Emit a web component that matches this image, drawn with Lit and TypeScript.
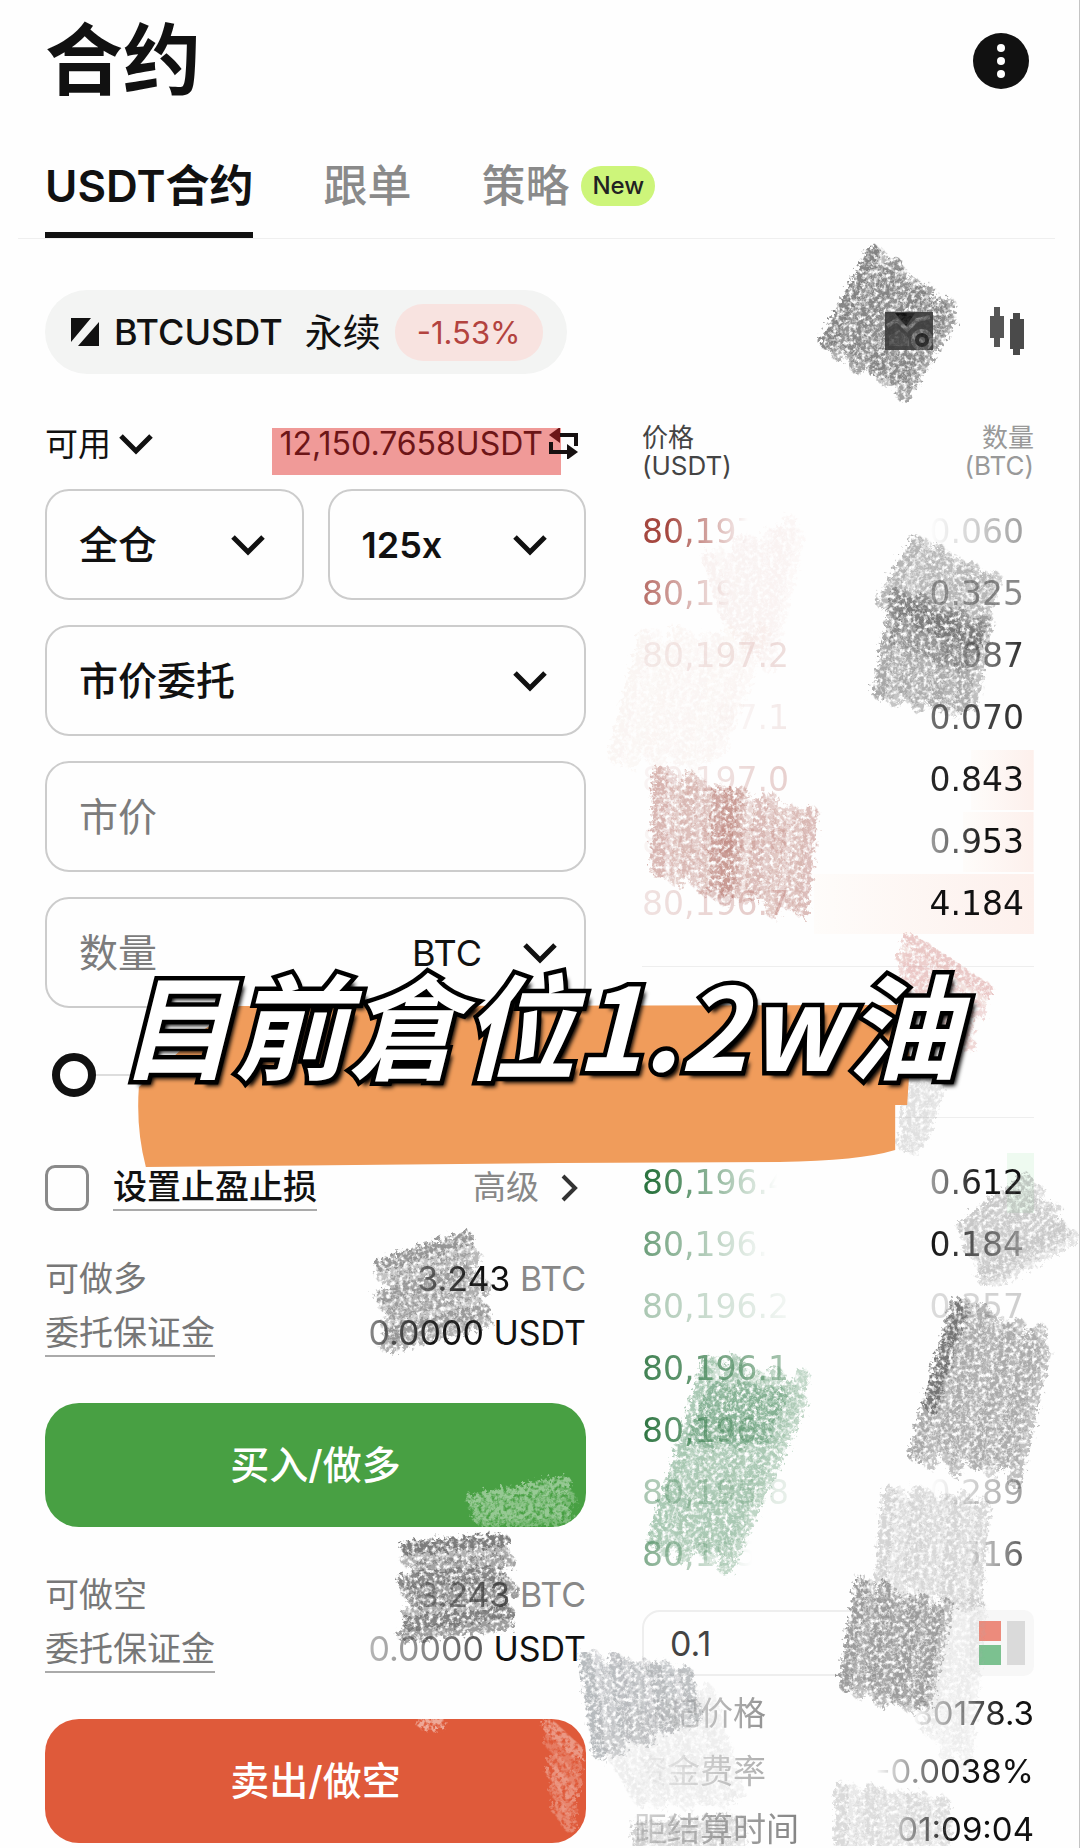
import { css, html, LitElement, svg } from 'lit';
import { customElement } from 'lit/decorators.js';
import { styleMap } from 'lit/directives/style-map.js';

type Point = [number, number];

// opacity of the text at its left and right end
type Fade = [number, number];

interface Level {
  price: string;
  priceFade: Fade;
  amount: string;
  amountFade: Fade;
  depth: number;
}

interface Scribble {
  from: [Point, Point];
  to: [Point, Point];
  color: string;
  opacity: number;
  lines: number;
}

const level = (
  price: string,
  priceFade: Fade,
  amount: string,
  amountFade: Fade,
  depth = 0
): Level => ({ price, priceFade, amount, amountFade, depth });

const asks: Level[] = [
  level('80,197.5', [1.3, -0.5], '0.060', [0, 0.4]),
  level('80,197.3', [0.8, -0.5], '0.325', [0.4, 0.5]),
  level('80,197.2', [0.1, 0.18], '0.087', [0, 0.9]),
  level('80,197.1', [-0.1, 0.12], '0.070', [0.6, 0.9]),
  level('80,197.0', [0.05, 0.25], '0.843', [0.9, 1], 16),
  level('80,196.8', [0.05, 0.2], '0.953', [0.4, 1.4], 18),
  level('80,196.7', [0.15, 0.3], '4.184', [1, 1], 56)
];

const bids: Level[] = [
  level('80,196.4', [1.1, -0.1], '0.612', [0.4, 1.5], 7),
  level('80,196.3', [0.7, -0.1], '0.184', [1, 0.4]),
  level('80,196.2', [0.4, 0.05], '0.357', [0.15, 0.2]),
  level('80,196.1', [0.9, 0.4], '', [0, 0]),
  level('80,196.0', [1, 0], '', [0, 0]),
  level('80,195.8', [0.4, 0.1], '0.289', [0, 0.4]),
  level('80,195.7', [0.6, -0.2], '0.516', [-0.4, 0.7])
];

const scribbles: Scribble[] = [
  { from: [[873, 254], [953, 316]], to: [[828, 342], [908, 388]], color: '#3c3c3c', opacity: 0.66, lines: 13 },
  { from: [[917, 544], [994, 584]], to: [[884, 602], [975, 648]], color: '#555', opacity: 0.45, lines: 12 },
  { from: [[898, 598], [986, 628]], to: [[880, 692], [970, 710]], color: '#4c4c4c', opacity: 0.5, lines: 12 },
  { from: [[910, 605], [980, 640]], to: [[895, 640], [960, 665]], color: '#444', opacity: 0.3, lines: 8 },
  { from: [[660, 776], [812, 818]], to: [[658, 870], [802, 910]], color: '#b06a60', opacity: 0.5, lines: 16 },
  { from: [[720, 798], [736, 802]], to: [[716, 892], [730, 896]], color: '#a55c52', opacity: 0.35, lines: 4 },
  { from: [[710, 560], [800, 525]], to: [[730, 620], [770, 660]], color: '#e9c9c4', opacity: 0.22, lines: 10 },
  { from: [[645, 640], [760, 640]], to: [[616, 756], [715, 760]], color: '#eed4cc', opacity: 0.22, lines: 12 },
  { from: [[912, 942], [905, 985]], to: [[986, 990], [960, 1050]], color: '#c4605a', opacity: 0.35, lines: 7 },
  { from: [[915, 1080], [940, 1080]], to: [[905, 1145], [920, 1145]], color: '#999', opacity: 0.3, lines: 4 },
  { from: [[966, 1228], [992, 1284]], to: [[1026, 1182], [1070, 1240]], color: '#666', opacity: 0.36, lines: 10 },
  { from: [[960, 1312], [1046, 1344]], to: [[916, 1454], [1018, 1470]], color: '#505050', opacity: 0.5, lines: 13 },
  { from: [[958, 1308], [964, 1308]], to: [[930, 1405], [934, 1407]], color: '#333', opacity: 0.45, lines: 2 },
  { from: [[708, 1368], [806, 1392]], to: [[656, 1540], [733, 1554]], color: '#4f8f63', opacity: 0.5, lines: 13 },
  { from: [[715, 1390], [780, 1395]], to: [[695, 1440], [760, 1440]], color: '#2f7a48', opacity: 0.35, lines: 8 },
  { from: [[890, 1496], [984, 1506]], to: [[882, 1580], [976, 1606]], color: '#777', opacity: 0.32, lines: 11 },
  { from: [[862, 1588], [946, 1614]], to: [[846, 1684], [926, 1708]], color: '#3c3c3c', opacity: 0.52, lines: 12 },
  { from: [[960, 1610], [980, 1612]], to: [[930, 1730], [966, 1765]], color: '#aaa', opacity: 0.22, lines: 5 },
  { from: [[842, 1792], [943, 1804]], to: [[842, 1844], [946, 1844]], color: '#888', opacity: 0.32, lines: 11 },
  { from: [[587, 1662], [686, 1674]], to: [[600, 1754], [696, 1718]], color: '#6c7278', opacity: 0.5, lines: 11 },
  { from: [[600, 1730], [710, 1700]], to: [[640, 1800], [740, 1800]], color: '#b5b5b5', opacity: 0.24, lines: 12 },
  { from: [[640, 1830], [740, 1822]], to: [[640, 1846], [740, 1846]], color: '#777', opacity: 0.35, lines: 10 },
  { from: [[384, 1266], [392, 1346]], to: [[466, 1239], [486, 1322]], color: '#404040', opacity: 0.58, lines: 9 },
  { from: [[410, 1549], [410, 1636]], to: [[502, 1542], [508, 1624]], color: '#303030', opacity: 0.68, lines: 9 },
  { from: [[476, 1502], [486, 1522]], to: [[564, 1484], [568, 1518]], color: '#fff', opacity: 0.45, lines: 5 },
  { from: [[550, 1728], [558, 1808]], to: [[578, 1754], [570, 1826]], color: '#fff', opacity: 0.4, lines: 6 },
  { from: [[424, 1724], [430, 1724]], to: [[438, 1724], [434, 1726]], color: '#fff', opacity: 0.5, lines: 2 }
];

const mix = (a: Point, b: Point, t: number): Point => [
  a[0] + (b[0] - a[0]) * t,
  a[1] + (b[1] - a[1]) * t
];

// repeatable wobble between -1 and 1
const wobble = (n: number) => Math.sin(n * 12.9898) * Math.cos(n * 4.1414);

const renderScribble = (mark: Scribble) => {
  const lines = Array.from({ length: mark.lines }, (_, i) => {
    const t = i / (mark.lines - 1);
    const start = mix(mark.from[0], mark.from[1], t);
    const end = mix(mark.to[0], mark.to[1], t);
    const a = mix(start, end, wobble(i + 1) * 0.1);
    const b = mix(end, start, wobble(i + 7) * 0.1);
    return svg`<line
      x1=${a[0]} y1=${a[1]} x2=${b[0]} y2=${b[1]}
      stroke-opacity=${0.7 + 0.25 * wobble(i + 3)}
    />`;
  });
  return svg`<g stroke=${mark.color} opacity=${mark.opacity}>${lines}</g>`;
};

const fadeStyle = ([start, end]: Fade) => {
  // an end outside 0..1 moves the point where the text is fully drawn or gone
  const clamp = (v: number) => Math.min(1, Math.max(0, v));
  const at = (limit: number) => Math.round(((limit - start) / (end - start)) * 100);
  const limits = start < end ? [0, 1] : [1, 0];
  const stops = [`rgba(0,0,0,${clamp(start)}) 0%`];
  limits.forEach((limit) => {
    if (start !== end && at(limit) > 0 && at(limit) < 100) {
      stops.push(`rgba(0,0,0,${limit}) ${at(limit)}%`);
    }
  });
  stops.push(`rgba(0,0,0,${clamp(end)}) 100%`);
  return styleMap({ maskImage: `linear-gradient(to right, ${stops.join(', ')})` });
};

const chevron = html`
  <svg class="chevron" viewBox="0 0 34 22" aria-hidden="true">
    <path d="M2 3L17 18L32 3" fill="none" stroke="currentColor" stroke-width="5" />
  </svg>
`;

@customElement('order-book')
export class OrderBook extends LitElement {
  static override styles = css`
    :host {
      display: block;
      min-width: 0;
      padding-top: 4px;
    }
    table {
      width: 100%;
      border-collapse: separate;
      border-spacing: 0 2px;
    }
    th {
      padding: 0 0 20px;
      font-size: 26px;
      font-weight: 400;
      line-height: 28px;
      text-align: left;
      color: #444;
    }
    th + th {
      text-align: right;
      color: #999;
    }
    td {
      height: 60px;
      padding: 0;
      font-family: 'DejaVu Sans', sans-serif;
      font-size: 33px;
      line-height: 40px;
    }
    td + td {
      padding-right: 10px;
      text-align: right;
      color: #111;
    }
    tr {
      background-repeat: no-repeat;
      background-position: right;
    }
    .asks tr {
      color: #a5473f;
      background-image: linear-gradient(to right, #fefcfa, #fdf0ec);
    }
    .bids tr {
      color: #2c7440;
      background-image: linear-gradient(#eefaf0, #eefaf0);
    }
    thead tr {
      background-size: 0;
    }
    .last {
      height: 150px;
      margin: 30px 0 33px;
      border: solid #eee;
      border-width: 1px 0;
    }
    .tools {
      display: flex;
      justify-content: space-between;
      margin-top: 23px;
      height: 66px;
    }
    select {
      box-sizing: border-box;
      width: 64%;
      padding: 0 26px;
      border: 2px solid #eee;
      border-radius: 18px;
      background: none;
      appearance: none;
      font: 400 34px 'Inter', sans-serif;
      color: #444;
    }
    button {
      display: grid;
      place-items: center;
      width: 64px;
      padding: 0;
      border: 0;
      border-radius: 10px;
      background: #f7f7f7;
    }
    dl {
      display: grid;
      grid-template-columns: auto auto;
      justify-content: space-between;
      row-gap: 20px;
      margin: 18px 0 0 -8px;
      font-size: 33px;
      line-height: 38px;
    }
    dt {
      color: #777;
    }
    dd {
      margin: 0;
      text-align: right;
      color: #111;
    }
    .hint {
      text-decoration: underline 2px #ddd;
      text-underline-offset: 10px;
    }
  `;

  private renderRows(levels: Level[]) {
    return levels.map(
      (row) => html`
        <tr style=${styleMap({ backgroundSize: `${row.depth}% 100%` })}>
          <td><span style=${fadeStyle(row.priceFade)}>${row.price}</span></td>
          <td><span style=${fadeStyle(row.amountFade)}>${row.amount}</span></td>
        </tr>
      `
    );
  }

  override render() {
    return html`
      <table class="asks">
        <thead>
          <tr>
            <th scope="col">价格<br />(USDT)</th>
            <th scope="col">数量<br />(BTC)</th>
          </tr>
        </thead>
        <tbody>
          ${this.renderRows(asks)}
        </tbody>
      </table>
      <div class="last"></div>
      <table class="bids">
        <tbody>
          ${this.renderRows(bids)}
        </tbody>
      </table>
      <div class="tools">
        <select aria-label="价格">
          <option>0.1</option>
        </select>
        <button aria-label="数量">
          <svg width="46" height="44" viewBox="0 0 46 44">
            <rect width="22" height="20" fill="#ec8b7c" />
            <rect y="24" width="22" height="20" fill="#7cc190" />
            <rect x="28" width="18" height="44" fill="#dadada" />
          </svg>
        </button>
      </div>
      <dl>
        <dt><span style=${fadeStyle([0, 0.8])}>标记价格</span></dt>
        <dd><span style=${fadeStyle([0, 1.3])}>80178.3</span></dd>
        <dt><span class="hint" style=${fadeStyle([0, 0.6])}>资金费率</span></dt>
        <dd><span style=${fadeStyle([0, 1.8])}>-0.0038%</span></dd>
        <dt><span style=${fadeStyle([0.3, 0.9])}>距结算时间</span></dt>
        <dd><span style=${fadeStyle([0.2, 2.4])}>01:09:04</span></dd>
      </dl>
    `;
  }
}

@customElement('app-root')
export class AppRoot extends LitElement {
  static override styles = css`
    :host {
      position: relative;
      display: block;
      box-sizing: border-box;
      overflow: hidden;
      border-right: 1px solid #c4c4c4;
      background: #fefefe;
      color: #111;
      font-family: 'Inter', 'Noto Sans CJK SC', sans-serif;
    }
    button,
    input,
    select {
      font-family: inherit;
      color: inherit;
    }
    button {
      border: 0;
      padding: 0;
      background: none;
    }
    header {
      display: flex;
      align-items: center;
      justify-content: space-between;
      height: 122px;
      padding: 0 50px 0 45px;
    }
    h1 {
      margin: 0;
      font-size: 78px;
      font-weight: 700;
      line-height: 88px;
    }
    .menu {
      display: block;
      height: 56px;
    }
    nav {
      display: flex;
      gap: 70px;
      margin: 0 24px 0 18px;
      padding: 0 27px;
      border-bottom: 1px solid #efefef;
    }
    .tab {
      display: flex;
      align-items: center;
      gap: 12px;
      padding: 38px 0 20px;
      border-bottom: 6px solid transparent;
      font-size: 44px;
      font-weight: 500;
      line-height: 52px;
      color: #8a8a8a;
      text-decoration: none;
    }
    .tab.active {
      border-color: #111;
      font-weight: 600;
      color: #111;
    }
    .new {
      padding: 0 11px;
      border-radius: 20px;
      background: #cdf57a;
      font-size: 24px;
      line-height: 40px;
      color: #222;
    }
    .toolbar {
      display: flex;
      align-items: center;
      justify-content: space-between;
      padding: 51px 55px 0 45px;
    }
    .pair {
      display: flex;
      align-items: center;
      height: 84px;
      padding: 0 24px 0 26px;
      border-radius: 42px;
      background: #f3f4f3;
      font-size: 36px;
      font-weight: 500;
    }
    .pair svg {
      margin-right: 15px;
    }
    .kind {
      margin: 0 14px 0 22px;
      padding-bottom: 5px;
      font-size: 38px;
      font-weight: 400;
    }
    .change {
      padding: 0 22px;
      border-radius: 28px;
      background: #f8e3e0;
      font-size: 31px;
      font-weight: 400;
      line-height: 57px;
      color: #b3433f;
    }
    .views {
      display: flex;
      align-items: center;
      gap: 57px;
    }
    main {
      display: grid;
      grid-template-columns: minmax(0, 541fr) minmax(0, 392fr);
      column-gap: 56px;
      padding: 44px 45px 0;
    }
    form {
      padding: 10px 0 6px;
    }
    .chevron {
      width: 34px;
      height: 22px;
    }
    .balance {
      display: flex;
      align-items: flex-start;
      justify-content: space-between;
      margin-bottom: 14px;
      padding-right: 8px;
      font-size: 32px;
      line-height: 32px;
    }
    .balance button {
      display: flex;
      align-items: center;
      gap: 8px;
      font-size: 33px;
      line-height: 32px;
    }
    .amount {
      display: flex;
    }
    .amount span {
      padding: 0 18px 15px 8px;
      background: #f09a98;
      color: #6d1517;
    }
    .amount svg {
      margin-left: -12px;
    }
    .fields {
      display: grid;
      grid-template-columns: 1fr 1fr;
      gap: 25px 24px;
    }
    .field {
      display: grid;
      grid-template-columns: minmax(0, 1fr);
      align-items: center;
      box-sizing: border-box;
      height: 111px;
      border: 2px solid #ccc;
      border-radius: 24px;
    }
    .wide {
      grid-column: 1 / -1;
    }
    .field > * {
      grid-row: 1;
      grid-column: 1;
    }
    .field .chevron {
      justify-self: end;
      margin-right: 37px;
      pointer-events: none;
    }
    .field select,
    .field input {
      box-sizing: border-box;
      width: 100%;
      height: 107px;
      padding: 0 32px;
      border: 0;
      background: none;
      appearance: none;
      font-size: 39px;
      font-weight: 500;
    }
    .field .leverage {
      font-size: 36px;
      font-weight: 600;
    }
    .field input::placeholder {
      color: #7c7c7c;
      opacity: 1;
      font-weight: 400;
    }
    .quantity {
      grid-template-columns: minmax(0, 1fr) 204px;
    }
    .quantity > select,
    .quantity > .chevron {
      grid-column: 2;
    }
    .field.quantity .chevron {
      margin-right: 27px;
    }
    .field.quantity select {
      font-size: 36px;
      font-weight: 400;
    }
    .slider {
      display: block;
      width: calc(100% - 7px);
      height: 44px;
      margin: 45px 0 0 7px;
      background: linear-gradient(#ddd, #ddd) center / 100% 2px no-repeat;
      appearance: none;
    }
    .slider::-webkit-slider-thumb {
      box-sizing: border-box;
      width: 44px;
      height: 44px;
      border: 8px solid #111;
      border-radius: 50%;
      background: #fff;
      appearance: none;
    }
    .stops {
      display: flex;
      align-items: center;
      justify-content: space-between;
      height: 48px;
      margin: 67px 0 40px;
      padding-right: 8px;
      font-size: 34px;
      line-height: 42px;
    }
    .stops label,
    .stops a {
      display: flex;
      align-items: center;
      gap: 24px;
    }
    .stops label {
      font-weight: 500;
    }
    .stops a {
      gap: 21px;
      font-size: 33px;
      color: #888;
      text-decoration: none;
    }
    .stops span {
      padding-bottom: 2px;
    }
    .stops input {
      width: 44px;
      height: 46px;
      margin: 0;
      border: 3px solid #8a8a8a;
      border-radius: 10px;
      appearance: none;
    }
    .hint {
      text-decoration: underline 2px #aaa;
      text-underline-offset: 10px;
    }
    dl {
      display: grid;
      grid-template-columns: auto auto;
      justify-content: space-between;
      margin: 0;
      font-size: 34px;
      line-height: 54px;
    }
    dt {
      color: #777;
    }
    dd {
      margin: 0;
      text-align: right;
    }
    .unit {
      color: #888;
    }
    .submit {
      display: block;
      width: 100%;
      height: 124px;
      margin: 43px 0 41px;
      padding-bottom: 6px;
      border-radius: 34px;
      font-size: 39px;
      font-weight: 500;
      color: #fff;
    }
    .long {
      background: #48a043;
    }
    .short {
      margin-bottom: 0;
      background: #df5a3a;
    }
    .marks {
      position: absolute;
      top: 0;
      left: 0;
      width: 100%;
      pointer-events: none;
    }
    .caption {
      position: absolute;
      top: 942px;
      left: 0;
      width: 100%;
      margin: 0;
      font-family: 'Noto Sans CJK TC', sans-serif;
      font-size: 114px;
      font-weight: 700;
      font-style: italic;
      line-height: 160px;
      text-align: center;
      white-space: nowrap;
      color: #fff;
      -webkit-text-stroke: 9px #000;
      paint-order: stroke fill;
      text-shadow: 5px 6px 4px #000;
      pointer-events: none;
    }
  `;

  private renderLimits(label: string, fade: Fade) {
    return html`
      <dl>
        <dt>${label}</dt>
        <dd><span style=${fadeStyle(fade)}>3.243</span> <span class="unit">BTC</span></dd>
        <dt><span class="hint">委托保证金</span></dt>
        <dd><span style=${fadeStyle(fade)}>0.0000</span> USDT</dd>
      </dl>
    `;
  }

  private renderForm() {
    return html`
      <form @submit=${(e: Event) => e.preventDefault()}>
        <div class="balance">
          <button type="button">可用${chevron}</button>
          <div class="amount">
            <span>12,150.7658USDT</span>
            <svg width="29" height="31" viewBox="0 0 29 31" aria-hidden="true">
              <g fill="none" stroke="#161010" stroke-width="4">
                <path d="M8 7H27V18" />
                <path d="M21 24H2V14" />
              </g>
              <path d="M29 24L18 16V32Z" fill="#161010" />
              <path d="M0 7L11 -1V15Z" fill="#6d1517" />
            </svg>
          </div>
        </div>
        <div class="fields">
          <div class="field">
            <select aria-label="全仓"><option>全仓</option></select>
            ${chevron}
          </div>
          <div class="field">
            <select class="leverage" aria-label="125x"><option>125x</option></select>
            ${chevron}
          </div>
          <div class="field wide">
            <select aria-label="市价委托"><option>市价委托</option></select>
            ${chevron}
          </div>
          <div class="field wide">
            <input aria-label="市价" placeholder="市价" />
          </div>
          <div class="field wide quantity">
            <input aria-label="数量" placeholder="数量" />
            <select aria-label="BTC"><option>BTC</option></select>
            ${chevron}
          </div>
        </div>
        <input class="slider" type="range" value="0" aria-label="数量" />
        <div class="stops">
          <label><input type="checkbox" /><span class="hint">设置止盈止损</span></label>
          <a href="#">
            <span>高级</span>
            <svg width="18" height="28" viewBox="0 0 18 28" aria-hidden="true">
              <path d="M3 2L15 14L3 26" fill="none" stroke="#333" stroke-width="4" />
            </svg>
          </a>
        </div>
        ${this.renderLimits('可做多', [0.5, 1.4])}
        <button class="submit long">买入/做多</button>
        ${this.renderLimits('可做空', [0.3, 0.7])}
        <button class="submit short">卖出/做空</button>
      </form>
    `;
  }

  private renderMarks() {
    return html`
      <svg class="marks" viewBox="0 0 1080 1848" aria-hidden="true">
        <defs>
          <filter id="grain" filterUnits="userSpaceOnUse" x="0" y="0" width="1080" height="1848">
            <feTurbulence type="fractalNoise" baseFrequency="0.24" numOctaves="3" seed="4" result="noise" />
            <feColorMatrix
              in="noise"
              values="0 0 0 0 0  0 0 0 0 0  0 0 0 0 0  3.2 0 0 0 -0.8"
              result="holes"
            />
            <feDisplacementMap in="SourceGraphic" in2="noise" scale="14" result="rough" />
            <feComposite in="rough" in2="holes" operator="in" />
          </filter>
        </defs>
        <g filter="url(#grain)" stroke-width="14" stroke-linecap="round">
          ${scribbles.map(renderScribble)}
        </g>
        <path
          d="M240 1007L903 1006L911 1060L908 1106H896V1151Q860 1162 780 1163L560 1164L146 1168Q136 1130 139 1088L205 1030Z"
          fill="#f09c5b"
        />
      </svg>
    `;
  }

  override render() {
    return html`
      <header>
        <h1>合约</h1>
        <button class="menu" aria-label="合约">
          <svg width="56" height="56" viewBox="0 0 56 56">
            <circle cx="28" cy="28" r="28" fill="#111" />
            <g fill="#fff">
              <circle cx="28" cy="15" r="4" />
              <circle cx="28" cy="28" r="4" />
              <circle cx="28" cy="41" r="4" />
            </g>
          </svg>
        </button>
      </header>
      <nav>
        <a class="tab active" href="#">USDT合约</a>
        <a class="tab" href="#">跟单</a>
        <a class="tab" href="#">策略<span class="new">New</span></a>
      </nav>
      <div class="toolbar">
        <button class="pair">
          <svg width="28" height="28" viewBox="0 0 28 28" aria-hidden="true">
            <path d="M0 0H20L0 24ZM28 4V28H7Z" fill="#111" />
          </svg>
          BTCUSDT
          <span class="kind">永续</span>
          <span class="change">-1.53%</span>
        </button>
        <div class="views">
          <button aria-label="价格">
            <svg width="48" height="38" viewBox="0 0 48 38">
              <path d="M0 0H48V38H0Z" fill="#4c4c4c" />
              <path d="M10 1H30L21 14Z" fill="#111" />
              <path d="M2 14L12 8L22 18L32 8L45 5" fill="none" stroke="#8b8b8b" stroke-width="4" />
              <path d="M4 34V24L14 18L24 26V34Z" fill="#666" />
              <circle cx="37" cy="28" r="11" fill="#8e8e8e" />
              <circle cx="37" cy="28" r="5" fill="#999" stroke="#222" stroke-width="4" />
            </svg>
          </button>
          <button aria-label="永续">
            <svg width="34" height="48" viewBox="0 0 34 48">
              <path d="M4 0H10V9H14V31H10V40H4V31H0V9H4Z" fill="#555" />
              <path d="M23 6H30V12H34V42H30V48H23V42H20V12H23Z" fill="#4a4a4a" />
            </svg>
          </button>
        </div>
      </div>
      <main>
        ${this.renderForm()}
        <order-book></order-book>
      </main>
      ${this.renderMarks()}
      <p class="caption">目前倉位1.2w油</p>
    `;
  }
}
